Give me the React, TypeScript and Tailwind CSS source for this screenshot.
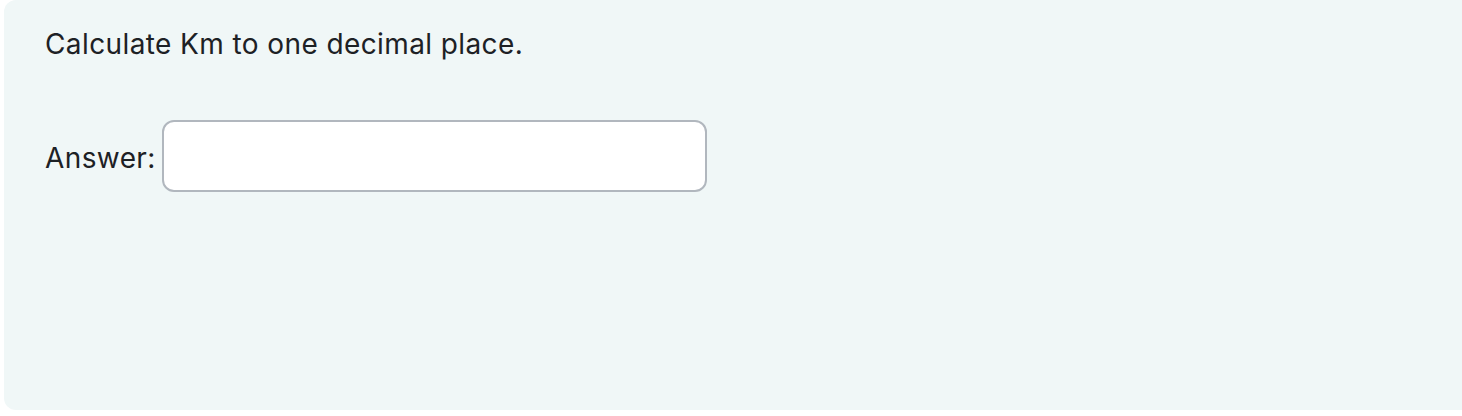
import React from 'react';

const App = () => {
  return (
    <div className="w-[1462px] h-[416px] bg-white pl-[4px]" style={{ fontFamily: 'Inter, "Noto Sans", sans-serif' }}>
      <div className="h-[410px] bg-[#f0f7f7] rounded-l-[12px] px-[41px] pt-[23px] text-[#1d2125] tracking-[0.4px]">
        <p className="text-[28px] leading-[42px]">Calculate Km to one decimal place.</p>
        <div className="mt-[55px] flex items-center gap-[6px]">
          <label className="text-[28px] leading-[42px] pt-[3px]">Answer:</label>
          <input
            type="text"
            className="w-[545px] h-[72px] bg-white border-[2px] border-[#b1b7be] rounded-[12px] px-[18px] text-[28px] outline-none"
          />
        </div>
      </div>
    </div>
  );
};

export default App;
